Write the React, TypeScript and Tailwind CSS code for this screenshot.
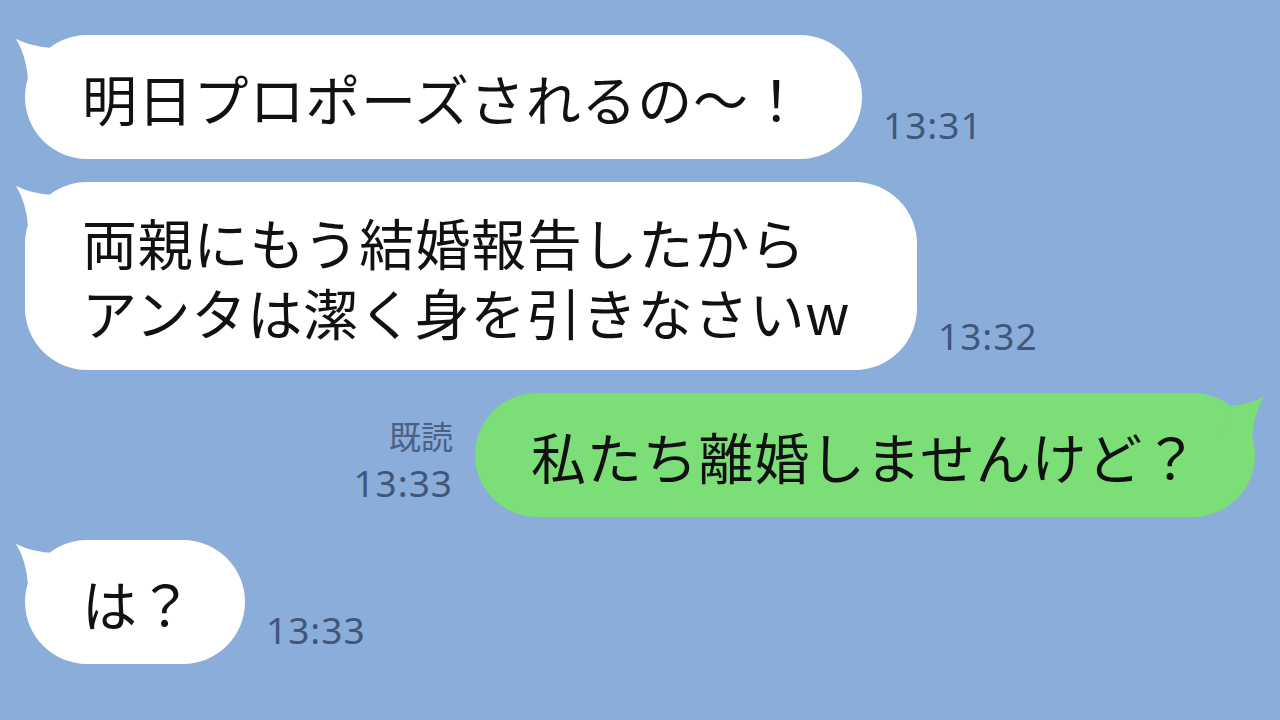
import { Fragment } from 'react'

const jp = { fontFamily: '"Noto Sans CJK JP", "Noto Sans", sans-serif' }
const num = { fontFamily: '"Noto Sans", Roboto, sans-serif' }

type Msg = {
  id: number
  mine: boolean
  lines: string[]
  time: string
  width: string
}

const messages: Msg[] = [
  { id: 1, mine: false, lines: ['明日プロポーズされるの～！'], time: '13:31', width: 'w-[837px]' },
  {
    id: 2,
    mine: false,
    lines: ['両親にもう結婚報告したから', 'アンタは潔く身を引きなさいw'],
    time: '13:32',
    width: 'w-[892px]',
  },
  { id: 3, mine: true, lines: ['私たち離婚しませんけど？'], time: '13:33', width: 'w-[780px]' },
  { id: 4, mine: false, lines: ['は？'], time: '13:33', width: 'w-[220px]' },
]

// little "ear" at the top corner of each bubble
function Tail({ color, mine }: { color: string; mine: boolean }) {
  return (
    <svg
      width="1"
      height="1"
      className={`absolute top-0 overflow-visible ${mine ? 'right-0 -scale-x-100' : 'left-0'}`}
    >
      <path d="M27 13 Q8 12 -9 4 Q1 20 3 44 L32 44 Z" fill={color} />
    </svg>
  )
}

function Time({ value }: { value: string }) {
  return (
    <span style={num} className="text-[37px] leading-[37px] tracking-[1px] text-[#3f5779] mb-[16px]">
      {value}
    </span>
  )
}

function Bubble({ msg }: { msg: Msg }) {
  const color = msg.mine ? '#7bde76' : '#ffffff'
  return (
    <div
      className={`relative ${msg.width} min-h-[124px] flex flex-col justify-center py-[24px] rounded-[62px] ${
        msg.mine ? 'bg-[#7bde76] pl-[56px]' : 'bg-white pl-[57px]'
      }`}
    >
      <Tail color={color} mine={msg.mine} />
      <p
        style={jp}
        className="relative text-[55px] leading-[70px] tracking-[0.8px] text-[#111] whitespace-nowrap"
      >
        {msg.lines.map((l, i) => (
          <Fragment key={l}>
            {i > 0 && <br />}
            {l}
          </Fragment>
        ))}
      </p>
    </div>
  )
}

export default function App() {
  return (
    <div className="w-[1280px] h-[720px] overflow-hidden bg-[#8badda]">
      <div className="flex flex-col gap-[23px] pt-[35px] px-[25px]">
        {messages.map((msg) =>
          msg.mine ? (
            <div key={msg.id} className="flex items-end justify-end gap-[22px]">
              <div className="flex flex-col items-end">
                <span style={jp} className="text-[32px] leading-[32px] text-[#4a6183] mb-[13px]">
                  既読
                </span>
                <Time value={msg.time} />
              </div>
              <Bubble msg={msg} />
            </div>
          ) : (
            <div key={msg.id} className="flex items-end gap-[21px]">
              <Bubble msg={msg} />
              <Time value={msg.time} />
            </div>
          )
        )}
      </div>
    </div>
  )
}
